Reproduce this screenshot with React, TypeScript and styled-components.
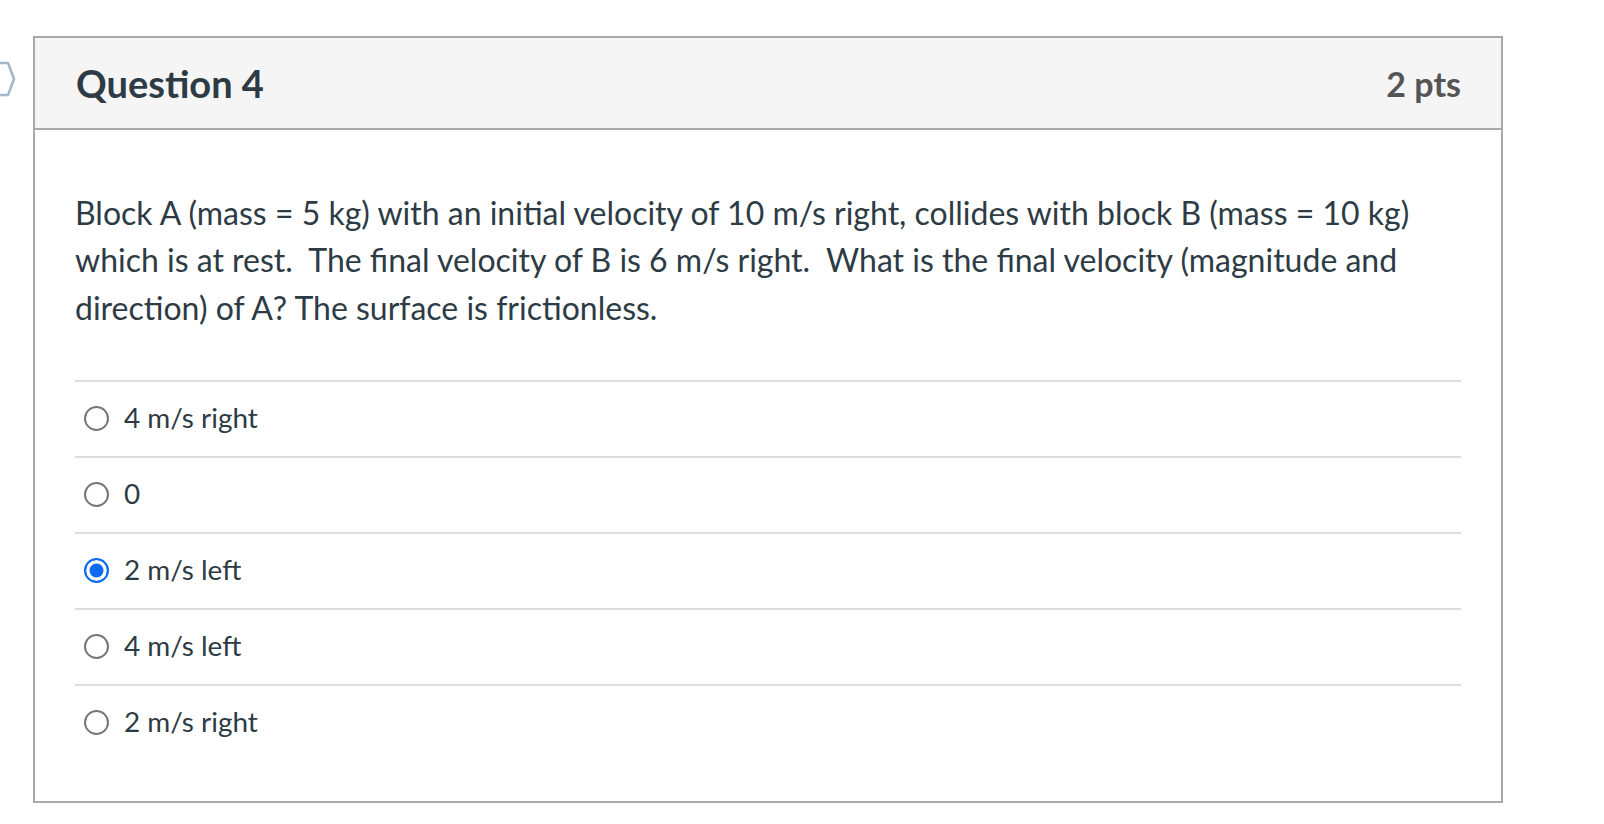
import React from "react";
import styled, { createGlobalStyle } from "styled-components";

const GlobalStyle = createGlobalStyle`
  html, body {
    margin: 0;
    padding: 0;
    background: #ffffff;
  }
  body {
    font-family: Lato, "Open Sans", "Liberation Sans", sans-serif;
    color: #2d3b45;
  }
`;

interface Answer {
  id: string;
  label: string;
  checked?: boolean;
}

const answers: Answer[] = [
  { id: "a1", label: "4 m/s right" },
  { id: "a2", label: "0" },
  { id: "a3", label: "2 m/s left", checked: true },
  { id: "a4", label: "4 m/s left" },
  { id: "a5", label: "2 m/s right" },
];

const Page = styled.div`
  display: flex;
  align-items: flex-start;
  padding-top: 36px;
`;

const Gutter = styled.div`
  width: 33px;
  padding-top: 25px;
  flex-shrink: 0;
`;

const Card = styled.section`
  width: 1470px;
  box-sizing: border-box;
  border: 2px solid #a9a9a9;
  background: #ffffff;
`;

const Header = styled.header`
  display: flex;
  align-items: center;
  justify-content: space-between;
  height: 90px;
  padding: 0 40px 0 41px;
  background: #f5f5f5;
  border-bottom: 2px solid #a9a9a9;
`;

const Title = styled.h2`
  margin: 0;
  font-size: 38px;
  font-weight: 700;
  color: #2d3b45;
`;

const Points = styled.span`
  font-size: 34px;
  font-weight: 700;
  color: #555555;
`;

const Body = styled.div`
  padding: 59px 40px 41px 40px;
`;

const QuestionText = styled.p`
  margin: 0 0 49px 0;
  font-size: 32px;
  line-height: 47.3px;
  color: #2d3b45;
`;

const AnswerList = styled.div`
  display: flex;
  flex-direction: column;
`;

const AnswerRow = styled.label`
  display: flex;
  align-items: center;
  box-sizing: border-box;
  height: 76px;
  border-top: 2px solid #dddddd;
  padding: 0 0 3px 9px;
  font-size: 27.9px;
  color: #2d3b45;
  cursor: pointer;
`;

const Radio = styled.span<{ $checked?: boolean }>`
  width: 25px;
  height: 25px;
  box-sizing: border-box;
  border-radius: 50%;
  margin: 3px 15px 0 0;
  flex-shrink: 0;
  border: 2px solid ${(p) => (p.$checked ? "#0b6cf0" : "#767676")};
  background: ${(p) => (p.$checked ? "#0b6cf0" : "#ffffff")};
  box-shadow: ${(p) => (p.$checked ? "inset 0 0 0 3.5px #ffffff" : "none")};
`;

const Chevron = () => (
  <svg width="16" height="36" viewBox="0 0 16 36" aria-hidden="true">
    <polyline
      points="0,2 8,2 14,18 8,34 0,34"
      fill="none"
      stroke="#a3b8c9"
      strokeWidth="2.5"
      strokeLinejoin="round"
    />
  </svg>
);

export default function App() {
  return (
    <>
      <GlobalStyle />
      <Page>
        <Gutter>
          <Chevron />
        </Gutter>
        <Card>
          <Header>
            <Title>Question 4</Title>
            <Points>2 pts</Points>
          </Header>
          <Body>
            <QuestionText>
              Block A (mass = 5 kg) with an initial velocity of 10 m/s right, collides with block B (mass = 10 kg)
              which is at rest.&nbsp; The final velocity of B is 6 m/s right.&nbsp; What is the final velocity (magnitude and
              direction) of A? The surface is frictionless.
            </QuestionText>
            <AnswerList>
              {answers.map((a) => (
                <AnswerRow key={a.id}>
                  <Radio $checked={a.checked} />
                  {a.label}
                </AnswerRow>
              ))}
            </AnswerList>
          </Body>
        </Card>
      </Page>
    </>
  );
}
